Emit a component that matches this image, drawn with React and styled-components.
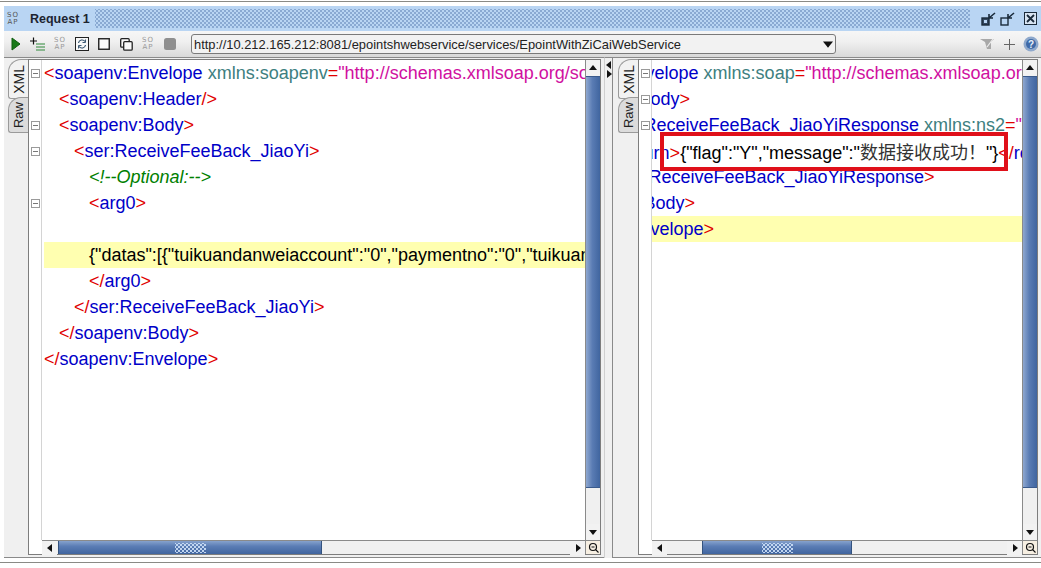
import React from "react";
import styled, { createGlobalStyle } from "styled-components";

const GlobalStyle = createGlobalStyle`
  html, body {
    margin: 0;
    padding: 0;
    background: #fff;
  }
`;

const Window = styled.div`
  width: 1041px;
  height: 568px;
  overflow: hidden;
  display: flex;
  flex-direction: column;
  background: #fff;
  font-family: "Liberation Sans", Arial, sans-serif;
`;

const TopRule = styled.div`
  height: 1px;
  margin: 1px 0 4px;
  background: #8a8a86;
`;

const TitleBar = styled.div`
  height: 25px;
  margin-left: 4px;
  display: flex;
  align-items: center;
  background: #b9d5f3;
`;

const SoapGlyph = styled.span`
  width: ${(props) => props.$width || 14}px;
  flex: none;
  font-size: 7px;
  line-height: 7px;
  letter-spacing: 1px;
  text-align: center;
  color: ${(props) => props.$color || "#555"};
  font-family: "DejaVu Sans", sans-serif;
`;

const TitleText = styled.span`
  margin-left: 8px;
  font-size: 12.5px;
  font-weight: bold;
  color: #1d2430;
  white-space: nowrap;
`;

const Dots = styled.div`
  flex: 1;
  height: 19px;
  margin: 0 11px 0 5px;
  background-color: #b9d5f3;
  background-image: radial-gradient(#86a6d0 0.7px, transparent 0.8px),
    radial-gradient(#86a6d0 0.7px, transparent 0.8px);
  background-size: 4px 4px;
  background-position: 0 0, 2px 2px;
`;

const TitleIcons = styled.div`
  display: flex;
  align-items: center;
  gap: 4px;
`;

const Toolbar = styled.div`
  height: 26px;
  margin-left: 4px;
  display: flex;
  align-items: center;
  padding-left: 1px;
  background: linear-gradient(#f6f6f6, #f0f0f0 40%, #d9d9d9);
  flex: none;
`;

const ToolButton = styled.div`
  width: 22px;
  height: 22px;
  flex: none;
  display: flex;
  align-items: center;
  justify-content: center;
`;

const UrlBox = styled.div`
  width: 645px;
  height: 20px;
  margin-left: 10px;
  box-sizing: border-box;
  flex: none;
  display: flex;
  align-items: center;
  justify-content: space-between;
  padding: 0 2px 0 2px;
  background: #f2f2f2;
  border: 1px solid #7a7a7a;
  border-radius: 3px;
  font-size: 12.9px;
  color: #222;
`;

const ToolbarEnd = styled.div`
  margin-left: auto;
  margin-right: -1px;
  display: flex;
  align-items: center;
`;

const Panes = styled.div`
  flex: none;
  height: 501px;
  margin-left: 4px;
  display: flex;
  background: #f0f0f0;
`;

const Pane = styled.div`
  width: ${(props) => props.$width}px;
  flex: none;
  box-sizing: border-box;
  display: flex;
  padding: 1px 3px 2px ${(props) => props.$inset}px;
  border-top: 1px solid #8a8a8a;
  border-bottom: 1px solid #8a8a8a;
`;

const Tabs = styled.div`
  width: 20px;
  flex: none;
  display: flex;
  flex-direction: column;
`;

const Tab = styled.div`
  box-sizing: border-box;
  width: 20px;
  height: ${(props) => props.$height}px;
  margin-top: ${(props) => (props.$active ? 0 : -2)}px;
  display: flex;
  align-items: center;
  justify-content: center;
  background: ${(props) => (props.$active ? "#f2f2f2" : "#dcdcdc")};
  border: 1px solid #9a9a9a;
  border-right: none;
  border-radius: 13px 0 0 3px;
  font-size: ${(props) => (props.$active ? 14 : 13)}px;
  color: #222;
  span {
    writing-mode: vertical-rl;
    transform: rotate(180deg);
  }
`;

const Editor = styled.div`
  flex: 1;
  min-width: 0;
  box-sizing: border-box;
  display: grid;
  grid-template-columns: 13px 1fr 15px;
  grid-template-rows: 1fr 14px;
  border: 1px solid #7d7d7d;
  background: #fff;
`;

const Gutter = styled.div`
  background: #fff;
  border-right: 1px solid #d4d4d4;
`;

const FoldSlot = styled.div`
  height: 26px;
  display: flex;
  align-items: center;
  justify-content: center;
`;

const FoldBox = styled.div`
  box-sizing: border-box;
  width: 9px;
  height: 9px;
  border: 1px solid #9a9a9a;
  display: flex;
  align-items: center;
  justify-content: center;
  &::after {
    content: "";
    width: 5px;
    height: 1px;
    background: #777;
  }
`;

const Code = styled.div`
  min-width: 0;
  overflow: hidden;
  padding-left: ${(props) => props.$inset}px;
  font-size: 18px;
  line-height: 26px;
  white-space: pre;
`;

const CodeLine = styled.div`
  height: 26px;
  background: ${(props) => (props.$current ? "#ffffb0" : "transparent")};
  color: #000;
`;

const LineText = styled.div`
  margin-left: ${(props) => props.$offset}px;
`;

const TOKEN_COLORS = {
  b: "#e00000",
  t: "#0000c8",
  a: "#3d8080",
  v: "#d010a0",
  c: "#008000",
  x: "#000",
};

const Token = styled.span`
  color: ${(props) => TOKEN_COLORS[props.$kind]};
  font-style: ${(props) => (props.$kind === "c" ? "italic" : "normal")};
`;

const Cjk = styled.span`
  font-family: "Noto Sans CJK SC", sans-serif;
  color: #333;
  font-size: 18px;
  line-height: 26px;
`;

const VScroll = styled.div`
  display: flex;
  flex-direction: column;
  background: #f0f0f0;
  border-left: 1px solid #8a8a8a;
`;

const HScroll = styled.div`
  display: flex;
  background: #f0f0f0;
  border-top: 1px solid #8a8a8a;
  grid-column: 2;
`;

const Arrow = styled.div`
  width: ${(props) => props.$w}px;
  height: ${(props) => props.$h}px;
  flex: none;
  display: flex;
  align-items: center;
  justify-content: center;
  background: #f2f2f2;
`;

const VThumb = styled.div`
  height: 412px;
  flex: none;
  box-sizing: border-box;
  background: linear-gradient(90deg, #8fa8d0, #5a7cb4 45%, #40659f);
  border-top: 1px solid #3a5a8c;
  border-bottom: 1px solid #3a5a8c;
`;

const HThumb = styled.div`
  width: ${(props) => props.$width}px;
  margin-left: ${(props) => props.$offset}px;
  flex: none;
  box-sizing: border-box;
  display: flex;
  align-items: center;
  justify-content: center;
  background: linear-gradient(#86a2cd, #5b7db5 40%, #40659f);
  border-left: 1px solid #34537f;
  border-right: 1px solid #34537f;
`;

const Grip = styled.div`
  width: 31px;
  height: 10px;
  background-image: radial-gradient(#c9dcf5 0.7px, transparent 0.8px),
    radial-gradient(#c9dcf5 0.7px, transparent 0.8px);
  background-size: 4px 4px;
  background-position: 0 0, 2px 2px;
`;

const Spacer = styled.div`
  flex: 1;
`;

const Corner = styled.div`
  display: flex;
  align-items: center;
  justify-content: center;
  background: #f7efe2;
  border-top: 1px solid #8a8a8a;
  border-left: 1px solid #8a8a8a;
`;

const Splitter = styled.div`
  width: 9px;
  flex: none;
  display: flex;
  flex-direction: column;
  align-items: center;
  gap: 1px;
  padding-top: 3px;
  box-sizing: border-box;
  background: #f0f0f0;
  border-top: 1px solid #8a8a8a;
  border-left: 1px solid #cfcfcf;
  border-right: 1px solid #8a8a8a;
`;

const BottomRule = styled.div`
  height: 1px;
  margin-top: 4px;
  background: #8a8a86;
`;

const RedBox = styled.div`
  position: absolute;
  left: 660px;
  top: 132px;
  width: 340px;
  height: 31px;
  border: 4px solid #e0101a;
`;

function tag(indent, name, close, extra, current) {
  return { indent, current, tokens: [["b", close === "end" ? "</" : "<"], ["t", name], ...(extra || []), ["b", close === "self" ? "/>" : ">"]] };
}

const LEFT_LINES = [
  tag(0, "soapenv:Envelope", "open", [["a", " xmlns:soapenv"], ["b", "="], ["v", '"http://schemas.xmlsoap.org/soap/envelope/"']]),
  tag(1, "soapenv:Header", "self"),
  tag(1, "soapenv:Body"),
  tag(2, "ser:ReceiveFeeBack_JiaoYi"),
  { indent: 3, tokens: [["c", "<!--Optional:-->"]] },
  tag(3, "arg0"),
  { indent: 0, tokens: [] },
  { indent: 3, current: true, tokens: [["x", '{"datas":[{"tuikuandanweiaccount":"0","paymentno":"0","tuikuandanwei":"0"}]}']] },
  tag(3, "arg0", "end"),
  tag(2, "ser:ReceiveFeeBack_JiaoYi", "end"),
  tag(1, "soapenv:Body", "end"),
  tag(0, "soapenv:Envelope", "end"),
];

const RIGHT_LINES = [
  tag(0, "soap:Envelope", "open", [["a", " xmlns:soap"], ["b", "="], ["v", '"http://schemas.xmlsoap.org/soap/envelope/"']]),
  tag(1, "soap:Body"),
  tag(2, "ns2:ReceiveFeeBack_JiaoYiResponse", "open", [["a", " xmlns:ns2"], ["b", "="], ["v", '"http://service.epoint.com/"']]),
  {
    indent: 2.87,
    tokens: [["b", "<"], ["t", "return"], ["b", ">"], ["x", '{"flag":"Y","message":"'], ["z", "数据接收成功！"], ["x", '"}'], ["b", "</"], ["t", "return"], ["b", ">"]],
  },
  tag(2, "ns2:ReceiveFeeBack_JiaoYiResponse", "end"),
  tag(1, "soap:Body", "end"),
  { ...tag(0, "soap:Envelope", "end"), current: true },
];

const PlayIcon = () => (
  <svg width="10" height="14" viewBox="0 0 10 14">
    <path d="M1 1 L9 7 L1 13 Z" fill="#1a7a1a" stroke="#0f5f0f" strokeLinejoin="round" />
  </svg>
);

const AddIcon = () => (
  <svg width="16" height="14" viewBox="0 0 16 14">
    <path d="M0 4h7M3.5 .5v7" stroke="#111" strokeWidth="1.2" />
    <path d="M6 7h9M6 10h9M6 13h9" stroke="#2f8a3a" strokeWidth="1.2" />
  </svg>
);

const RefreshIcon = () => (
  <svg width="14" height="14" viewBox="0 0 14 14">
    <rect x=".5" y=".5" width="13" height="13" fill="#f8f8f8" stroke="#222" />
    <path d="M3.5 6 A3.6 3.6 0 0 1 10 4.5 M10.5 8 A3.6 3.6 0 0 1 4 9.5" fill="none" stroke="#2a4a66" strokeWidth="1.1" />
    <path d="M10.5 2.5v3h-3M3.5 11.5v-3h3" fill="none" stroke="#2a4a66" strokeWidth=".9" />
  </svg>
);

const SquareIcon = () => (
  <svg width="12" height="12" viewBox="0 0 12 12">
    <rect x=".75" y=".75" width="10.5" height="10.5" fill="#fafafa" stroke="#222" strokeWidth="1.4" />
  </svg>
);

const CopyIcon = () => (
  <svg width="13" height="13" viewBox="0 0 13 13">
    <rect x=".7" y=".7" width="8.5" height="8.5" rx="1" fill="#fafafa" stroke="#222" strokeWidth="1.3" />
    <rect x="3.7" y="3.7" width="8.5" height="8.5" rx="1" fill="#fafafa" stroke="#222" strokeWidth="1.3" />
  </svg>
);

const StopIcon = () => (
  <svg width="12" height="12" viewBox="0 0 12 12">
    <rect width="12" height="12" rx="2.5" fill="#8f8f8f" />
  </svg>
);

const DockIcon = ({ dark }) => (
  <svg width="15" height="14" viewBox="0 0 15 14">
    <rect x="1" y="6" width="7" height="7" fill={dark ? "#33475f" : "none"} stroke="#1a2a3a" strokeWidth="1.4" />
    {dark && <rect x="3" y="8" width="3" height="3" fill="#b9d5f3" />}
    <path d="M14 1 L8 6 M8 2v4h4" fill="none" stroke="#1a2a3a" strokeWidth="1.6" />
  </svg>
);

const CloseIcon = () => (
  <svg width="13" height="13" viewBox="0 0 13 13">
    <rect x=".5" y=".5" width="12" height="12" fill="#d8e4f2" stroke="#1a2a3a" />
    <path d="M3 3l7 7M10 3l-7 7" stroke="#1a2a3a" strokeWidth="1.8" />
  </svg>
);

const ConeIcon = () => (
  <svg width="14" height="12" viewBox="0 0 14 12">
    <path d="M0 1h14L11 4v7H7L5 4z" fill="#a8a8a8" />
    <path d="M13 1L7 9" stroke="#ececec" strokeWidth="1.2" />
  </svg>
);

const PlusIcon = () => (
  <svg width="11" height="11" viewBox="0 0 11 11">
    <path d="M0 5.5h11M5.5 0v11" stroke="#666" strokeWidth="1" />
  </svg>
);

const HelpIcon = () => (
  <svg width="16" height="16" viewBox="0 0 16 16">
    <circle cx="8" cy="8" r="7.5" fill="#8fa9cc" />
    <circle cx="8" cy="8" r="5" fill="#3e6aa8" />
    <text x="8" y="11.5" fontSize="10" fontWeight="bold" fill="#e8f0fa" textAnchor="middle" fontFamily="Liberation Sans">?</text>
  </svg>
);

const Tri = ({ dir, size = 8 }) => {
  const paths = {
    up: "M4 1 L8 6 H0 Z",
    down: "M0 2 H8 L4 7 Z",
    left: "M6 0 V8 L1 4 Z",
    right: "M2 0 V8 L7 4 Z",
  };
  return (
    <svg width={size} height={size} viewBox="0 0 8 8">
      <path d={paths[dir]} fill="#111" />
    </svg>
  );
};

const ZoomIcon = () => (
  <svg width="11" height="11" viewBox="0 0 11 11">
    <circle cx="5" cy="5" r="3.5" fill="none" stroke="#111" strokeWidth="1.2" />
    <path d="M7.5 7.5L10.5 10.5M3.5 5h3" stroke="#111" strokeWidth="1.1" />
  </svg>
);

function EditorPane({ width, inset, lines, folds, codeInset, base, hOffset, hWidth }) {
  return (
    <Pane $width={width} $inset={inset}>
      <Tabs>
        <Tab $active $height={40}>
          <span>XML</span>
        </Tab>
        <Tab $height={36}>
          <span>Raw</span>
        </Tab>
      </Tabs>
      <Editor>
        <Gutter>
          {lines.map((_, i) => (
            <FoldSlot key={i}>{folds.includes(i) && <FoldBox />}</FoldSlot>
          ))}
        </Gutter>
        <Code $inset={codeInset}>
          {lines.map((line, i) => (
            <CodeLine key={i} $current={line.current}>
              <LineText $offset={base + line.indent * 15}>
                {line.tokens.map(([kind, text], j) =>
                  kind === "z" ? <Cjk key={j}>{text}</Cjk> : <Token key={j} $kind={kind}>{text}</Token>
                )}
              </LineText>
            </CodeLine>
          ))}
        </Code>
        <VScroll>
          <Arrow $w={14} $h={16}>
            <Tri dir="up" />
          </Arrow>
          <VThumb />
          <Spacer />
          <Arrow $w={14} $h={16}>
            <Tri dir="down" />
          </Arrow>
        </VScroll>
        <span />
        <HScroll>
          <Arrow $w={15} $h={14}>
            <Tri dir="left" />
          </Arrow>
          <HThumb $width={hWidth} $offset={hOffset}>
            <Grip />
          </HThumb>
          <Spacer />
          <Arrow $w={15} $h={14}>
            <Tri dir="right" />
          </Arrow>
        </HScroll>
        <Corner>
          <ZoomIcon />
        </Corner>
      </Editor>
    </Pane>
  );
}

export default function App() {
  return (
    <Window>
      <GlobalStyle />
      <TopRule />
      <TitleBar>
        <SoapGlyph $width={18}>
          SO
          <br />
          AP
        </SoapGlyph>
        <TitleText>Request 1</TitleText>
        <Dots />
        <TitleIcons>
          <DockIcon dark />
          <DockIcon />
          <ToolButton>
            <CloseIcon />
          </ToolButton>
        </TitleIcons>
      </TitleBar>
      <Toolbar>
        <ToolButton>
          <PlayIcon />
        </ToolButton>
        <ToolButton>
          <AddIcon />
        </ToolButton>
        <ToolButton>
          <SoapGlyph $color="#999">
            SO
            <br />
            AP
          </SoapGlyph>
        </ToolButton>
        <ToolButton>
          <RefreshIcon />
        </ToolButton>
        <ToolButton>
          <SquareIcon />
        </ToolButton>
        <ToolButton>
          <CopyIcon />
        </ToolButton>
        <ToolButton>
          <SoapGlyph $color="#999">
            SO
            <br />
            AP
          </SoapGlyph>
        </ToolButton>
        <ToolButton>
          <StopIcon />
        </ToolButton>
        <UrlBox>
          http://10.212.165.212:8081/epointshwebservice/services/EpointWithZiCaiWebService
          <Tri dir="down" size={10} />
        </UrlBox>
        <ToolbarEnd>
          <ToolButton>
            <ConeIcon />
          </ToolButton>
          <ToolButton>
            <PlusIcon />
          </ToolButton>
          <ToolButton>
            <HelpIcon />
          </ToolButton>
        </ToolbarEnd>
      </Toolbar>
      <Panes>
        <EditorPane width={600} inset={4} lines={LEFT_LINES} folds={[0, 2, 3, 5]} codeInset={2} base={0} hOffset={1} hWidth={264} />
        <Splitter>
          <Tri dir="left" />
          <Tri dir="right" />
        </Splitter>
        <EditorPane width={428} inset={5} lines={RIGHT_LINES} folds={[0, 1, 2]} codeInset={0} base={-83} hOffset={35} hWidth={150} />
      </Panes>
      <BottomRule />
      <RedBox />
    </Window>
  );
}
